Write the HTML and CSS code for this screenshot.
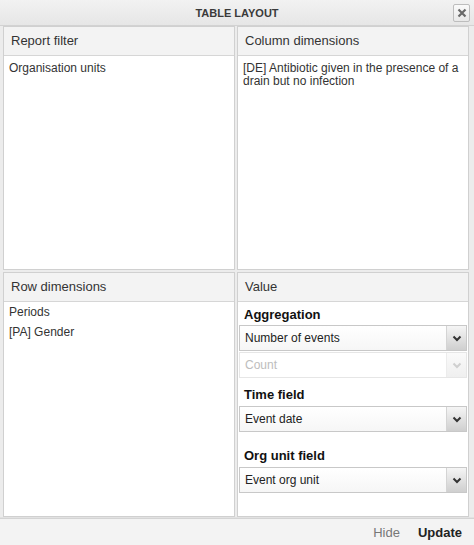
FILE: index.html
```html
<!DOCTYPE html>
<html>
<head>
<meta charset="utf-8">
<link rel="stylesheet" href="styles.css">
</head>
<body>
<div class="window">
  <div class="titlebar">
    <span class="title">TABLE LAYOUT</span>
    <span class="close"><svg width="10" height="10" viewBox="0 0 10 10"><path d="M1.5 1.5 L8.5 8.5 M8.5 1.5 L1.5 8.5" stroke="#6a6a6a" stroke-width="2.2" fill="none"/></svg></span>
  </div>
  <div class="grid">
    <div class="panel">
      <div class="phead">Report filter</div>
      <div class="pbody top">
        <div class="item">Organisation units</div>
      </div>
    </div>
    <div class="panel">
      <div class="phead">Column dimensions</div>
      <div class="pbody top">
        <div class="item">[DE] Antibiotic given in the presence of a drain but no infection</div>
      </div>
    </div>
    <div class="panel">
      <div class="phead">Row dimensions</div>
      <div class="pbody">
        <div class="item">Periods</div>
        <div class="item">[PA] Gender</div>
      </div>
    </div>
    <div class="panel">
      <div class="phead">Value</div>
      <div class="vbody">
        <div class="label">Aggregation</div>
        <div class="select">
          <span class="stext">Number of events</span>
          <span class="trigger"><svg width="10" height="7" viewBox="0 0 10 7"><path d="M1.5 1.5 L5 5 L8.5 1.5" stroke="#333" stroke-width="2" fill="none"/></svg></span>
        </div>
        <div class="select disabled">
          <span class="stext">Count</span>
          <span class="trigger"><svg width="10" height="7" viewBox="0 0 10 7"><path d="M1.5 1.5 L5 5 L8.5 1.5" stroke="#cfcfcf" stroke-width="2" fill="none"/></svg></span>
        </div>
        <div class="label l2">Time field</div>
        <div class="select">
          <span class="stext">Event date</span>
          <span class="trigger"><svg width="10" height="7" viewBox="0 0 10 7"><path d="M1.5 1.5 L5 5 L8.5 1.5" stroke="#333" stroke-width="2" fill="none"/></svg></span>
        </div>
        <div class="label l3">Org unit field</div>
        <div class="select">
          <span class="stext">Event org unit</span>
          <span class="trigger"><svg width="10" height="7" viewBox="0 0 10 7"><path d="M1.5 1.5 L5 5 L8.5 1.5" stroke="#333" stroke-width="2" fill="none"/></svg></span>
        </div>
      </div>
    </div>
  </div>
  <div class="footer">
    <span class="hide">Hide</span>
    <span class="update">Update</span>
  </div>
</div>
</body>
</html>
```

FILE: styles.css
```css
html, body {
  margin: 0;
  padding: 0;
}
body {
  font-family: "Liberation Sans", Arial, sans-serif;
  color: #222;
  background: #e2e2e2;
}
.window {
  width: 474px;
  height: 545px;
  display: flex;
  flex-direction: column;
  background: #e2e2e2;
  overflow: hidden;
}
.titlebar {
  height: 25px;
  flex: none;
  display: flex;
  align-items: center;
  justify-content: center;
  position: relative;
  background: linear-gradient(#f2f2f2, #e6e6e6);
  border-bottom: 1px solid #d2d2d2;
}
.title {
  font-size: 11px;
  font-weight: bold;
  color: #3a3a3a;
}
.close {
  position: absolute;
  right: 4px;
  top: 4px;
  width: 15px;
  height: 16px;
  border: 1px solid #bdbdbd;
  border-radius: 2px;
  background: linear-gradient(#fafafa, #e8e8e8);
  display: flex;
  align-items: center;
  justify-content: center;
}
.grid {
  flex: none;
  display: grid;
  grid-template-columns: 232px 232px;
  grid-template-rows: 244px 245px;
  gap: 2px;
  padding: 0 5px 0 3px;
  background: #ececec;
}
.panel {
  border: 1px solid #d0d0d0;
  background: #fff;
  display: flex;
  flex-direction: column;
  min-height: 0;
}
.phead {
  height: 28px;
  flex: none;
  border-bottom: 1px solid #d6d6d6;
  background: #f3f3f3;
  font-size: 13px;
  color: #333;
  line-height: 28px;
  padding-left: 7px;
}
.pbody {
  flex: 1;
}
.pbody.top {
  padding-top: 2px;
}
.item {
  font-size: 12px;
  line-height: 13px;
  padding: 3.5px 5px;
  color: #333;
}
.vbody {
  flex: 1;
  padding: 5px 1px 0 1px;
}
.label {
  font-size: 13px;
  font-weight: bold;
  line-height: 16px;
  height: 16px;
  padding-left: 5px;
  margin-bottom: 2px;
  color: #111;
}
.label.l2 {
  margin-top: 9px;
  margin-bottom: 3px;
}
.label.l3 {
  margin-top: 16px;
  margin-bottom: 3px;
}
.select {
  height: 24px;
  border: 1px solid #c8c8c8;
  background: linear-gradient(#ffffff, #f6f6f6);
  display: flex;
  align-items: stretch;
  margin-bottom: 1px;
}
.stext {
  flex: 1;
  font-size: 12px;
  line-height: 24px;
  padding-left: 5px;
  color: #222;
}
.trigger {
  width: 19px;
  flex: none;
  border-left: 1px solid #d4d4d4;
  background: linear-gradient(#f5f5f5, #cfcfcf);
  display: flex;
  align-items: center;
  justify-content: center;
}
.select.disabled {
  border-color: #e6e6e6;
  background: #fff;
}
.select.disabled .stext {
  color: #bdbdbd;
}
.select.disabled .trigger {
  background: linear-gradient(#fafafa, #efefef);
  border-left-color: #ececec;
}
.footer {
  flex: 1;
  margin-top: 1px;
  border-top: 1px solid #d4d4d4;
  background: #f3f3f3;
  display: flex;
  align-items: center;
  justify-content: flex-end;
  padding-right: 12px;
  gap: 18px;
  font-size: 13px;
}
.hide {
  color: #777;
}
.update {
  font-weight: bold;
  color: #222;
}
```
